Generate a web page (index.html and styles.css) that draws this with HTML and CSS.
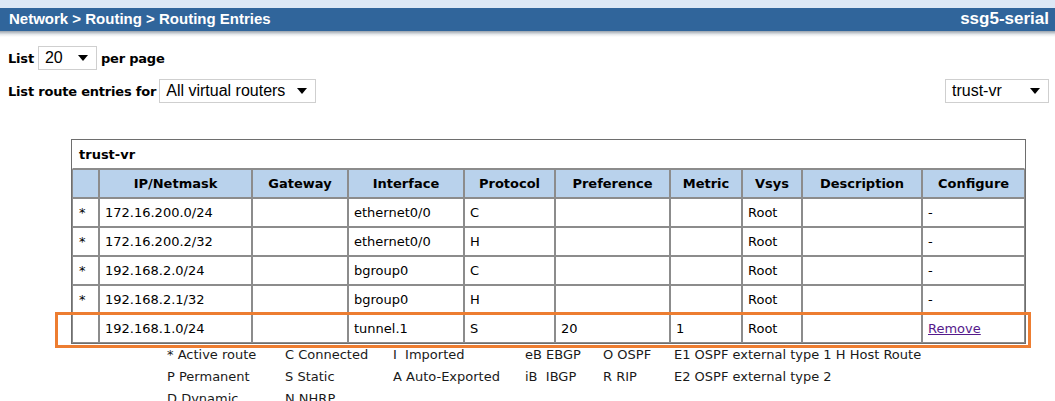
FILE: index.html
```html
<!DOCTYPE html>
<html>
<head>
<meta charset="utf-8">
<link rel="stylesheet" href="styles.css">
</head>
<body>
<div class="topstrip"></div>
<div class="titlebar">
  <span class="crumbs">Network &gt; Routing &gt; Routing Entries</span>
  <span class="device">ssg5-serial</span>
</div>
<div class="shadow"></div>

<div class="controls">
  <div class="line line1">
    <b>List</b>
    <span class="sel sel-small"><span class="val">20</span><span class="arrow"></span></span>
    <b>per page</b>
  </div>
  <div class="line line2">
    <div class="left">
      <b>List route entries for</b>
      <span class="sel sel-wide"><span class="val">All virtual routers</span><span class="arrow"></span></span>
    </div>
    <span class="sel sel-vr"><span class="val">trust-vr</span><span class="arrow"></span></span>
  </div>
</div>

<div class="tablewrap">
  <table class="routes">
    <colgroup>
      <col class="c0"><col class="c1"><col class="c2"><col class="c3"><col class="c4">
      <col class="c5"><col class="c6"><col class="c7"><col class="c8"><col class="c9">
    </colgroup>
    <tr class="vrrow"><td colspan="10">trust-vr</td></tr>
    <tr class="head">
      <th></th><th>IP/Netmask</th><th>Gateway</th><th>Interface</th><th>Protocol</th>
      <th>Preference</th><th>Metric</th><th>Vsys</th><th>Description</th><th>Configure</th>
    </tr>
    <tr><td>*</td><td>172.16.200.0/24</td><td></td><td>ethernet0/0</td><td>C</td><td></td><td></td><td>Root</td><td></td><td>-</td></tr>
    <tr><td>*</td><td>172.16.200.2/32</td><td></td><td>ethernet0/0</td><td>H</td><td></td><td></td><td>Root</td><td></td><td>-</td></tr>
    <tr><td>*</td><td>192.168.2.0/24</td><td></td><td>bgroup0</td><td>C</td><td></td><td></td><td>Root</td><td></td><td>-</td></tr>
    <tr><td>*</td><td>192.168.2.1/32</td><td></td><td>bgroup0</td><td>H</td><td></td><td></td><td>Root</td><td></td><td>-</td></tr>
    <tr><td></td><td>192.168.1.0/24</td><td></td><td>tunnel.1</td><td>S</td><td>20</td><td>1</td><td>Root</td><td></td><td><a href="#" class="remove">Remove</a></td></tr>
  </table>
  <div class="highlight"></div>
</div>

<div class="legend">
  <span>* Active route</span><span>C Connected</span><span>I&nbsp; Imported</span><span>eB EBGP</span><span>O OSPF</span><span>E1 OSPF external type 1 H Host Route</span>
  <span>P Permanent</span><span>S Static</span><span>A Auto-Exported</span><span>iB&nbsp; IBGP</span><span>R RIP</span><span>E2 OSPF external type 2</span>
  <span>D Dynamic</span><span>N NHRP</span><span></span><span></span><span></span><span></span>
</div>
</body>
</html>
```
FILE: styles.css
```css
html, body {
  margin: 0;
  padding: 0;
  background: #ffffff;
}
body {
  width: 1055px;
  height: 401px;
  overflow: hidden;
  font-family: "DejaVu Sans", Verdana, sans-serif;
  font-size: 13px;
  color: #000;
}
.topstrip {
  height: 8px;
  background: #dce8f5;
}
.titlebar {
  height: 23px;
  background: #30659b;
  display: flex;
  justify-content: space-between;
  align-items: center;
  padding: 0 6px 0 9px;
  color: #fff;
  font-family: "Liberation Sans", Arial, sans-serif;
  font-weight: bold;
}
.crumbs {
  font-size: 15px;
  margin-top: -3px;
}
.device {
  font-size: 17px;
  margin-top: -2px;
}
.shadow {
  height: 6px;
  background: linear-gradient(#9aa3ad, #e8ebee 60%, #ffffff);
}
.controls {
  padding: 8px 6px 0 8px;
}
.line {
  display: flex;
  align-items: center;
}
.line b {
  font-weight: bold;
  letter-spacing: -0.2px;
}
.line1 {
  height: 26px;
  gap: 4px;
}
.line2 {
  margin-top: 7px;
  height: 26px;
  justify-content: space-between;
}
.line2 .left {
  display: flex;
  align-items: center;
  gap: 3px;
}
.sel {
  display: inline-flex;
  align-items: center;
  justify-content: space-between;
  height: 24px;
  box-sizing: border-box;
  border: 1px solid #cfcfcf;
  background: #fff;
  font-family: "Liberation Sans", Arial, sans-serif;
  font-size: 16px;
  padding: 0 8px 0 6px;
  color: #000;
}
.sel-small { width: 59px; }
.sel-wide { width: 157px; }
.sel-vr { width: 104px; }
.arrow {
  width: 0;
  height: 0;
  border-left: 5px solid transparent;
  border-right: 5px solid transparent;
  border-top: 6px solid #000;
}
.tablewrap {
  position: relative;
  margin: 35px 0 0 71px;
  width: 954px;
}
.routes {
  border-collapse: separate;
  border-spacing: 0;
  table-layout: fixed;
  width: 954px;
  border: 1px solid #6e6e6e;
}
.c0 { width: 27px; }
.c1 { width: 153px; }
.c2 { width: 96px; }
.c3 { width: 116px; }
.c4 { width: 91px; }
.c5 { width: 115px; }
.c6 { width: 72px; }
.c7 { width: 60px; }
.c8 { width: 120px; }
.c9 { width: 103px; }
.routes td, .routes th {
  border: 1px solid #8c8c8c;
  height: 27px;
  padding: 0 5px;
  white-space: nowrap;
  overflow: hidden;
  text-align: left;
  font-size: 13px;
}
.routes .vrrow td {
  font-weight: bold;
  border-color: #ffffff #ffffff #8c8c8c #ffffff;
  height: 26px;
  padding: 0 5px 1px 5px;
}
.routes th {
  background: #b9d2ec;
  font-weight: bold;
  text-align: center;
}
.routes tr td:first-child {
  padding-left: 6px;
}
.remove {
  color: #551a8b;
  text-decoration: underline;
}
.highlight {
  position: absolute;
  left: -16px;
  top: 173px;
  width: 976px;
  height: 36px;
  box-sizing: border-box;
  border: 3px solid #ed7d31;
  pointer-events: none;
}
.legend {
  display: grid;
  grid-template-columns: 118px 108px 132px 78px 71px auto;
  grid-auto-rows: 22px;
  margin: 0 0 0 167px;
  color: #1a1a1a;
  font-size: 13px;
  line-height: 22px;
  white-space: nowrap;
}
```
